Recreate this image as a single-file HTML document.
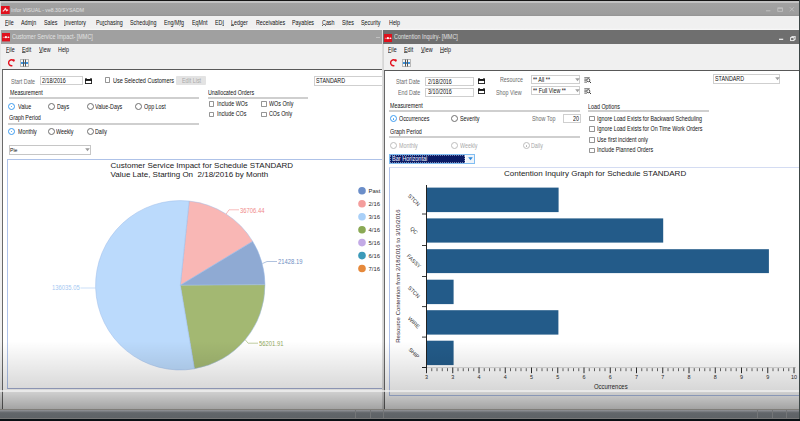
<!DOCTYPE html>
<html><head><meta charset="utf-8"><style>
*{margin:0;padding:0;box-sizing:border-box}
html,body{width:800px;height:421px;overflow:hidden}
body{position:relative;background:#f0f0f0;font-family:"Liberation Sans",sans-serif}
.a{position:absolute}
.t{position:absolute;white-space:nowrap;font-size:6.3px;line-height:10px;height:10px;color:#111;transform:scaleX(.85);transform-origin:0 0;-webkit-text-stroke-width:0px}
u{text-decoration-thickness:0.5px;text-underline-offset:0px;text-decoration-color:#666}
.n{transform:none;-webkit-text-stroke-width:0}
.g{color:#6a6a6a}
.w{color:#e2e2e2;-webkit-text-stroke-width:0}
.d{color:#a8a8a8}
.inp{position:absolute;background:#fff;border:1px solid #cfcfcf}
.sep{position:absolute;height:2px;background:#cfcfcf}
.rad{position:absolute;width:7px;height:7px;border:1.1px solid #6e6e6e;border-radius:50%;background:#fff}
.rad.on{border-color:#3d9cf0;border-width:1.3px}
.rad.on::after{content:"";position:absolute;left:1.5px;top:1.5px;width:1.9px;height:1.9px;border-radius:50%;background:#3d9cf0}
.rad.dis{border-color:#bdbdbd}
.rad.dis.on::after{background:#b0b0b0}
.chk{position:absolute;width:5.5px;height:5.5px;border:1px solid #959595;border-radius:0.8px;background:#fff}
.cal{position:absolute;width:6.8px;height:6.2px;border:0.8px solid #333;border-top-width:1.6px;border-radius:0.8px;background:#fff}
</style></head><body>

<!-- top dark strip + main title -->
<div class="a" style="left:0;top:0;width:800px;height:1.4px;background:#151515"></div>
<div class="a" style="left:0;top:1.4px;width:800px;height:1.4px;background:#c2c2c2"></div>
<div class="a" style="left:0;top:2.8px;width:800px;height:13.7px;background:linear-gradient(#a2a2a2,#9d9d9d 85%,#949494)"></div>
<svg class="a" style="left:1.3px;top:5.8px" width="8.7" height="8.2" viewBox="0 0 8.7 8.2"><rect width="8.7" height="8.2" fill="#e0101c"/><path d="M1.8 5.4L3.2 4.2L4.4 2.6L5.6 4.6L7.2 3.8" fill="none" stroke="#fff" stroke-width="1.2" opacity=".85"/></svg>
<div class="t w" style="left:11.3px;top:5px;font-size:6.05px;color:#e0e0e0">Infor VISUAL - ve8.30/SYSADM</div>
<div class="a" style="left:0;top:1.4px;width:1px;height:15px;background:#d4d4d4"></div>
<svg class="a" style="left:764px;top:5px" width="34" height="9" viewBox="764 5 34 9"><path d="M766 10.8H770.4" stroke="#c4c4c4" stroke-width="0.9"/><rect x="777.8" y="7.9" width="4.6" height="3.4" fill="none" stroke="#c4c4c4" stroke-width="0.8"/><path d="M777.8 8.3H782.4" stroke="#c4c4c4" stroke-width="0.9"/><path d="M789.8 7.2L793.9 11.3M793.9 7.2L789.8 11.3" stroke="#c4c4c4" stroke-width="0.8"/></svg>

<!-- main menu -->
<div class="a" style="left:0;top:16.5px;width:799px;height:13px;background:linear-gradient(#f0f0f0 85%,#f8f8f8)"></div>
<div class="t" style="left:5px;top:17.5px"><u>F</u>ile</div>
<div class="t" style="left:21px;top:17.5px">Adm<u>i</u>n</div>
<div class="t" style="left:44px;top:17.5px">S<u>a</u>les</div>
<div class="t" style="left:64px;top:17.5px"><u>I</u>nventory</div>
<div class="t" style="left:96px;top:17.5px">Pu<u>r</u>chasing</div>
<div class="t" style="left:130px;top:17.5px">Schedu<u>l</u>ing</div>
<div class="t" style="left:164px;top:17.5px">Eng/<u>M</u>fg</div>
<div class="t" style="left:191.5px;top:17.5px">E<u>q</u>Mnt</div>
<div class="t" style="left:215px;top:17.5px">ED<u>I</u></div>
<div class="t" style="left:231px;top:17.5px"><u>L</u>edger</div>
<div class="t" style="left:256px;top:17.5px">Receiv<u>a</u>bles</div>
<div class="t" style="left:292px;top:17.5px">Paya<u>b</u>les</div>
<div class="t" style="left:322px;top:17.5px"><u>C</u>ash</div>
<div class="t" style="left:341.5px;top:17.5px">Si<u>t</u>es</div>
<div class="t" style="left:361px;top:17.5px"><u>S</u>ecurity</div>
<div class="t" style="left:389px;top:17.5px"><u>H</u>elp</div>

<!-- ============ LEFT CHILD WINDOW ============ -->
<div class="a" style="left:0;top:29.5px;width:383px;height:381px;background:#f0f0f0"></div>
<div class="a" style="left:0;top:30px;width:383px;height:13.5px;background:#a0a0a0"></div>
<div class="a" style="left:0;top:29.5px;width:1px;height:40px;background:#e4e4e4"></div>
<svg class="a" style="left:2px;top:33.3px" width="8.3" height="8.4" viewBox="0 0 8.3 8.4"><rect width="8.3" height="8.4" fill="#e0101c"/><path d="M0.8 4.3H7.4" stroke="#fff" stroke-width="0.7" opacity=".7"/><circle cx="3.9" cy="4.2" r="1.1" fill="#fff" opacity=".9"/><circle cx="6.5" cy="4.3" r="0.8" fill="#fff" opacity=".9"/></svg>
<div class="t w" style="left:12px;top:32px;font-size:6.45px">Customer Service Impact- [MMC]</div>
<div class="a" style="left:376px;top:37px;width:4px;height:1px;background:#c0c0c0"></div>
<div class="t" style="left:6px;top:44.5px"><u>F</u>ile</div>
<div class="t" style="left:22px;top:44.5px"><u>E</u>dit</div>
<div class="t" style="left:39px;top:44.5px"><u>V</u>iew</div>
<div class="t" style="left:58px;top:44.5px"><u>H</u>elp</div>
<!-- toolbar icons -->
<svg class="a" style="left:7px;top:58px" width="10" height="10" viewBox="0 0 10 10"><path d="M6.32 2.34 A3 3 0 1 0 4.86 7.79" fill="none" stroke="#e3101e" stroke-width="1.4" stroke-linecap="round"/><circle cx="6.7" cy="2.5" r="1.15" fill="#e3101e"/></svg>
<svg class="a" style="left:20px;top:59px" width="9" height="8" viewBox="0 0 9 8"><rect x="0.5" y="0.5" width="8" height="7" fill="#f6f6f6" stroke="#b8b8b8" stroke-width="1"/><rect x="1" y="3" width="7" height="2" fill="#3d94e0"/><rect x="3" y="0.5" width="1" height="7" fill="#555"/><rect x="5" y="0.5" width="1" height="7" fill="#555"/></svg>

<!-- content frame -->
<div class="a" style="left:2px;top:69px;width:381px;height:341px;background:#fff;border-left:1.2px solid #6a6a6a;border-top:1.2px solid #585858"></div>
<div class="t g" style="left:11px;top:77px">Start Date</div>
<div class="inp" style="left:39.5px;top:76px;width:43px;height:9px"></div>
<div class="t" style="left:42px;top:76px">2/18/2016</div>
<svg class="a" style="left:85px;top:77.7px" width="7" height="6" viewBox="0 0 7 6"><rect x="0.45" y="1.5" width="6.1" height="4.05" fill="#fff" stroke="#1c1c1c" stroke-width="0.9"/><rect x="0" y="1.2" width="7" height="1.7" fill="#111"/><rect x="0.3" y="0" width="1.4" height="1.6" fill="#333"/><rect x="5.3" y="0" width="1.4" height="1.6" fill="#333"/></svg>
<div class="chk" style="left:104.5px;top:77.3px"></div>
<div class="t" style="left:112.5px;top:76px;font-size:6.5px">Use Selected Customers</div>
<div class="a" style="left:176px;top:76px;width:30px;height:9px;background:#e3e3e3;border-radius:1px"></div>
<div class="t d" style="left:181.5px;top:75.5px">Edit List</div>
<div class="inp" style="left:313.5px;top:76px;width:75px;height:9.5px"></div>
<div class="t" style="left:316px;top:76px">STANDARD</div>

<div class="t" style="left:10px;top:87.5px">Measurement</div>
<div class="sep" style="left:8.5px;top:97px;width:190.5px"></div>
<div class="rad on" style="left:8px;top:103px"></div><div class="t" style="left:18px;top:102px">Value</div>
<div class="rad" style="left:48px;top:103px"></div><div class="t" style="left:57px;top:102px">Days</div>
<div class="rad" style="left:87px;top:103px"></div><div class="t" style="left:95px;top:102px">Value-Days</div>
<div class="rad" style="left:135px;top:103px"></div><div class="t" style="left:143.5px;top:102px">Opp Lost</div>
<div class="t" style="left:8.5px;top:113px">Graph Period</div>
<div class="sep" style="left:8px;top:122.8px;width:191px"></div>
<div class="rad on" style="left:8px;top:128px"></div><div class="t" style="left:17.5px;top:127px">Monthly</div>
<div class="rad" style="left:48px;top:128px"></div><div class="t" style="left:56px;top:127px">Weekly</div>
<div class="rad" style="left:87px;top:128px"></div><div class="t" style="left:95px;top:127px">Daily</div>

<div class="t" style="left:208px;top:87.5px">Unallocated Orders</div>
<div class="sep" style="left:208px;top:97px;width:99.5px"></div>
<div class="chk" style="left:208.5px;top:101px"></div><div class="t" style="left:217px;top:98.5px">Include WOs</div>
<div class="chk" style="left:261px;top:101px"></div><div class="t" style="left:269px;top:98.5px">WOs Only</div>
<div class="chk" style="left:208.5px;top:111.5px"></div><div class="t" style="left:217px;top:109px">Include COs</div>
<div class="chk" style="left:261px;top:111.5px"></div><div class="t" style="left:269px;top:109px">COs Only</div>

<!-- Pie dropdown -->
<div class="inp" style="left:8.5px;top:145px;width:82.5px;height:10px;border-color:#c6c6c6"></div>
<div class="t" style="left:10px;top:145px;font-size:6.08px">Pie</div>
<svg class="a" style="left:84.7px;top:148.4px" width="5" height="3.4" viewBox="0 0 5 3.4"><path d="M0.2 0.2H4.8L2.5 3.2Z" fill="#9a9a9a"/></svg>

<!-- pie chart box -->
<div class="a" style="left:7px;top:159px;width:380px;height:229.5px;border:1px solid #aec2e8;border-bottom:1.6px solid #a4aed2;background:#fff"></div>
<div class="t n" style="left:110.5px;top:161px;font-size:8px;color:#1a1a1a">Customer Service Impact for Schedule STANDARD</div>
<div class="t n" style="left:110.5px;top:169.9px;font-size:8px;color:#1a1a1a">Value Late, Starting On&nbsp; 2/18/2016 by Month</div>
<svg class="a" style="left:0;top:0" width="383" height="400" viewBox="0 0 383 400">
  <g stroke="#9ebde8" stroke-width="0.5">
  <path id="p1" d="M180.3 285.3L189.15 201.06A84.7 84.7 0 0 1 252.73 241.40Z" fill="#f9b7b5"/>
  <path id="p2" d="M180.3 285.3L252.73 241.40A84.7 84.7 0 0 1 265.00 284.69Z" fill="#8faad3"/>
  <path id="p3" d="M180.3 285.3L265.00 284.69A84.7 84.7 0 0 1 194.42 368.81Z" fill="#a3b872"/>
  <path id="p4" d="M180.3 285.3L194.42 368.81A84.7 84.7 0 1 1 189.15 201.06Z" fill="#bbdafc"/>
  </g>
  <polyline points="226.2,214 229,209.8 239,209.8" fill="none" stroke="#f28d8d" stroke-width="0.6"/>
  <polyline points="262.5,263.5 267,261.5 277,261.5" fill="none" stroke="#7b98c8" stroke-width="0.6"/>
  <polyline points="245.3,339.9 248.1,343.2 258,343.2" fill="none" stroke="#97ad63" stroke-width="0.6"/>
  <polyline points="80.5,288 95.5,288" fill="none" stroke="#a9cbf3" stroke-width="0.6"/>
  <g stroke="none">
  <circle cx="362" cy="190.7" r="3.8" fill="#6b8ec9"/>
  <circle cx="362" cy="203.7" r="3.8" fill="#f49d9c"/>
  <circle cx="362" cy="216.7" r="3.8" fill="#a9d0f8"/>
  <circle cx="362" cy="229.7" r="3.8" fill="#8aa955"/>
  <circle cx="362" cy="242.6" r="3.8" fill="#c3aae6"/>
  <circle cx="362" cy="255.6" r="3.8" fill="#3c9ab9"/>
  <circle cx="362" cy="268.5" r="3.8" fill="#e6893b"/>
  </g>
</svg>
<div class="t n" style="left:240px;top:205.5px;font-size:6.5px;transform:scaleX(.9);color:#f08a8a">36706.44</div>
<div class="t n" style="left:277.5px;top:256.5px;font-size:6.5px;transform:scaleX(.9);color:#6f8fc4">21428.19</div>
<div class="t n" style="left:259.4px;top:339px;font-size:6.5px;transform:scaleX(.9);color:#91a85c">56201.91</div>
<div class="t n" style="left:51.8px;top:282.5px;font-size:6.5px;transform:scaleX(.9);color:#a5c8f2">136035.05</div>
<div class="t n" style="left:368.5px;top:185.7px;font-size:5.9px;color:#2a2a2a">Past</div>
<div class="t n" style="left:368.5px;top:198.7px;font-size:5.9px;color:#2a2a2a">2/16</div>
<div class="t n" style="left:368.5px;top:211.7px;font-size:5.9px;color:#2a2a2a">3/16</div>
<div class="t n" style="left:368.5px;top:224.7px;font-size:5.9px;color:#2a2a2a">4/16</div>
<div class="t n" style="left:368.5px;top:237.6px;font-size:5.9px;color:#2a2a2a">5/16</div>
<div class="t n" style="left:368.5px;top:250.6px;font-size:5.9px;color:#2a2a2a">6/16</div>
<div class="t n" style="left:368.5px;top:263.5px;font-size:5.9px;color:#2a2a2a">7/16</div>

<!-- ============ RIGHT CHILD WINDOW ============ -->
<div class="a" style="left:382px;top:29.5px;width:2px;height:381px;background:#dcdcdc"></div>
<div class="a" style="left:383px;top:29.5px;width:416px;height:381px;background:#f0f0f0;border-left:1px solid #d6d6d6"></div>
<div class="a" style="left:383px;top:30px;width:416px;height:13.5px;background:#6f6f6f"></div>
<svg class="a" style="left:384px;top:33.5px" width="8.3" height="8.4" viewBox="0 0 8.3 8.4"><rect width="8.3" height="8.4" fill="#e0101c"/><path d="M0.8 4.3H7.4" stroke="#fff" stroke-width="0.7" opacity=".7"/><circle cx="3.9" cy="4.2" r="1.1" fill="#fff" opacity=".9"/><circle cx="6.5" cy="4.3" r="0.8" fill="#fff" opacity=".9"/></svg>
<div class="t w" style="left:394px;top:32px;font-size:6.45px">Contention Inquiry- [MMC]</div>
<svg class="a" style="left:776px;top:34px" width="22" height="8" viewBox="776 34 22 8"><path d="M779 39.3H783.2" stroke="#f2f2f2" stroke-width="1.2"/><rect x="791.9" y="36.4" width="3.3" height="3" fill="none" stroke="#f0f0f0" stroke-width="0.8"/><rect x="790.6" y="37.6" width="3.4" height="3" fill="#6f6f6f" stroke="#f4f4f4" stroke-width="0.9"/></svg>
<div class="t" style="left:388px;top:45px"><u>F</u>ile</div>
<div class="t" style="left:404px;top:45px"><u>E</u>dit</div>
<div class="t" style="left:421px;top:45px"><u>V</u>iew</div>
<div class="t" style="left:440px;top:45px"><u>H</u>elp</div>
<svg class="a" style="left:389px;top:58.3px" width="10" height="10" viewBox="0 0 10 10"><path d="M6.32 2.34 A3 3 0 1 0 4.86 7.79" fill="none" stroke="#e3101e" stroke-width="1.4" stroke-linecap="round"/><circle cx="6.7" cy="2.5" r="1.15" fill="#e3101e"/></svg>
<svg class="a" style="left:402px;top:59px" width="9" height="8" viewBox="0 0 9 8"><rect x="0.5" y="0.5" width="8" height="7" fill="#f6f6f6" stroke="#b8b8b8" stroke-width="1"/><rect x="1" y="3" width="7" height="2" fill="#3d94e0"/><rect x="3" y="0.5" width="1" height="7" fill="#555"/><rect x="5" y="0.5" width="1" height="7" fill="#555"/></svg>

<div class="a" style="left:384px;top:69.5px;width:415px;height:341px;background:#fff;border-left:1.4px solid #686868;border-top:1.2px solid #585858"></div>
<div class="t g" style="left:396px;top:77.3px">Start Date</div>
<div class="inp" style="left:425.4px;top:76.5px;width:48.6px;height:9px"></div>
<div class="t" style="left:427.5px;top:76.5px">2/18/2016</div>
<svg class="a" style="left:478px;top:77.7px" width="7" height="6" viewBox="0 0 7 6"><rect x="0.45" y="1.5" width="6.1" height="4.05" fill="#fff" stroke="#1c1c1c" stroke-width="0.9"/><rect x="0" y="1.2" width="7" height="1.7" fill="#111"/><rect x="0.3" y="0" width="1.4" height="1.6" fill="#333"/><rect x="5.3" y="0" width="1.4" height="1.6" fill="#333"/></svg>
<div class="t g" style="left:398px;top:88.2px">End Date</div>
<div class="inp" style="left:425.4px;top:87.5px;width:48.6px;height:9px"></div>
<div class="t" style="left:427.5px;top:87.2px">3/10/2016</div>
<svg class="a" style="left:478px;top:88px" width="7" height="6" viewBox="0 0 7 6"><rect x="0.45" y="1.5" width="6.1" height="4.05" fill="#fff" stroke="#1c1c1c" stroke-width="0.9"/><rect x="0" y="1.2" width="7" height="1.7" fill="#111"/><rect x="0.3" y="0" width="1.4" height="1.6" fill="#333"/><rect x="5.3" y="0" width="1.4" height="1.6" fill="#333"/></svg>
<div class="t g" style="left:499.6px;top:74.8px">Resource</div>
<div class="t g" style="left:496px;top:88.2px">Shop View</div>
<div class="inp" style="left:530.7px;top:75px;width:49.5px;height:9.2px"></div>
<div class="t" style="left:533px;top:74.5px">** All **</div>
<svg class="a" style="left:574.7px;top:78.4px" width="5" height="3.4" viewBox="0 0 5 3.4"><path d="M0.2 0.2H4.8L2.5 3.2Z" fill="#a0a0a0"/></svg>
<div class="inp" style="left:530.7px;top:86px;width:49.5px;height:9.2px"></div>
<div class="t" style="left:533px;top:85.5px">** Full View **</div>
<svg class="a" style="left:574.7px;top:89.4px" width="5" height="3.4" viewBox="0 0 5 3.4"><path d="M0.2 0.2H4.8L2.5 3.2Z" fill="#a0a0a0"/></svg>
<svg class="a" style="left:583.7px;top:77px" width="7.5" height="6.5" viewBox="0 0 7.5 6.5"><path d="M0.3 0.7H5.8M0.3 2.2H2.6M0.3 3.7H2.3M0.3 5.2H3" stroke="#3a3a3a" stroke-width="0.7"/><circle cx="4.3" cy="3.2" r="1.55" fill="#fff" stroke="#2a2a2a" stroke-width="0.75"/><path d="M5.4 4.3L6.9 5.9" stroke="#222" stroke-width="1"/></svg>
<svg class="a" style="left:583.7px;top:87.6px" width="7.5" height="6.5" viewBox="0 0 7.5 6.5"><path d="M0.3 0.7H5.8M0.3 2.2H2.6M0.3 3.7H2.3M0.3 5.2H3" stroke="#3a3a3a" stroke-width="0.7"/><circle cx="4.3" cy="3.2" r="1.55" fill="#fff" stroke="#2a2a2a" stroke-width="0.75"/><path d="M5.4 4.3L6.9 5.9" stroke="#222" stroke-width="1"/></svg>
<div class="inp" style="left:712.6px;top:74.3px;width:67.4px;height:9.7px"></div>
<div class="t" style="left:714.5px;top:74px">STANDARD</div>
<svg class="a" style="left:774.7px;top:77.4px" width="5" height="3.4" viewBox="0 0 5 3.4"><path d="M0.2 0.2H4.8L2.5 3.2Z" fill="#a0a0a0"/></svg>

<div class="t" style="left:389.6px;top:101px">Measurement</div>
<div class="sep" style="left:389px;top:109.9px;width:191px"></div>
<div class="rad on" style="left:390px;top:115.3px"></div><div class="t" style="left:399px;top:114.3px">Occurrences</div>
<div class="rad" style="left:451px;top:115.3px"></div><div class="t" style="left:460px;top:114.3px">Severity</div>
<div class="t g" style="left:531.8px;top:114px">Show Top</div>
<div class="inp" style="left:563px;top:114.2px;width:17.8px;height:9.1px"></div>
<div class="t" style="left:573px;top:113.5px">20</div>
<div class="t" style="left:389.6px;top:126.7px">Graph Period</div>
<div class="sep" style="left:389px;top:136px;width:191px"></div>
<div class="rad dis" style="left:390px;top:142.3px"></div><div class="t d" style="left:399px;top:141.3px">Monthly</div>
<div class="rad dis" style="left:451px;top:142.3px"></div><div class="t d" style="left:460px;top:141.3px">Weekly</div>
<div class="rad dis on" style="left:523px;top:142.3px;border-color:#bdbdbd"></div><div class="t d" style="left:531px;top:141.3px">Daily</div>
<div class="a" style="left:389.3px;top:154px;width:85.7px;height:9.5px;background:#fff;border:1px solid #80bdf2"></div>
<div class="a" style="left:390.3px;top:154.8px;width:75px;height:8px;background:#0a1c66;border:0.6px dotted #8088b0"></div>
<div class="t" style="left:391.5px;top:153.8px;color:#f4f4ff;font-size:6.55px;-webkit-text-stroke-width:0">Bar Horizontal</div>
<div class="a" style="left:466px;top:155px;width:8px;height:7.6px;background:#eef3f9"></div>
<svg class="a" style="left:467.7px;top:157.4px" width="5" height="3.4" viewBox="0 0 5 3.4"><path d="M0.2 0.2H4.8L2.5 3.2Z" fill="#2a88dd"/></svg>

<div class="t" style="left:588.3px;top:102px">Load Options</div>
<div class="sep" style="left:588px;top:110px;width:121px"></div>
<div class="chk" style="left:589px;top:115.8px"></div><div class="t" style="left:597px;top:114.3px">Ignore Load Exists for Backward Scheduling</div>
<div class="chk" style="left:589px;top:126.3px"></div><div class="t" style="left:597px;top:123.7px">Ignore Load Exists for On Time Work Orders</div>
<div class="chk" style="left:589px;top:137.3px"></div><div class="t" style="left:597px;top:134.7px">Use first incident only</div>
<div class="chk" style="left:589px;top:147.5px"></div><div class="t" style="left:597px;top:145px">Include Planned Orders</div>

<!-- bar chart box -->
<div class="a" style="left:389px;top:167px;width:420px;height:228.6px;border:1px solid #b0c2ea;border-top-color:#d4dcf2;background:#fff"></div>
<div class="t n" style="left:504px;top:168.7px;font-size:8px;color:#1a1a1a">Contention Inquiry Graph for Schedule STANDARD</div>
<svg class="a" style="left:383px;top:0" width="417" height="421" viewBox="383 0 417 421">
  <g fill="#235b89">
    <rect x="427" y="187.6" width="131.6" height="24.5"/>
    <rect x="427" y="218.4" width="236.2" height="24.2"/>
    <rect x="427" y="249.2" width="341.9" height="23.9"/>
    <rect x="427" y="279.7" width="26.6" height="24.4"/>
    <rect x="427" y="310.2" width="131.4" height="24.4"/>
    <rect x="427" y="340.7" width="26.6" height="24.4"/>
  </g>
  <g stroke="#222" fill="none">
    <path d="M426.5 185V368" stroke-width="1"/>
    <path d="M422 367.5H427" stroke-width="1"/><path d="M427 367.6H796" stroke="#999" stroke-width="0.4"/>
    <path id="ticks" d="M426.50 367.5V373.2M452.75 367.5V373.2M479.00 367.5V373.2M505.25 367.5V373.2M531.50 367.5V373.2M557.75 367.5V373.2M584.00 367.5V373.2M610.25 367.5V373.2M636.50 367.5V373.2M662.75 367.5V373.2M689.00 367.5V373.2M715.25 367.5V373.2M741.50 367.5V373.2M767.75 367.5V373.2M794.00 367.5V373.2" stroke-width="0.95"/><path id="ticks2" d="M431.75 368.2V371.2M437.00 368.2V371.2M442.25 368.2V371.2M447.50 368.2V371.2M458.00 368.2V371.2M463.25 368.2V371.2M468.50 368.2V371.2M473.75 368.2V371.2M484.25 368.2V371.2M489.50 368.2V371.2M494.75 368.2V371.2M500.00 368.2V371.2M510.50 368.2V371.2M515.75 368.2V371.2M521.00 368.2V371.2M526.25 368.2V371.2M536.75 368.2V371.2M542.00 368.2V371.2M547.25 368.2V371.2M552.50 368.2V371.2M563.00 368.2V371.2M568.25 368.2V371.2M573.50 368.2V371.2M578.75 368.2V371.2M589.25 368.2V371.2M594.50 368.2V371.2M599.75 368.2V371.2M605.00 368.2V371.2M615.50 368.2V371.2M620.75 368.2V371.2M626.00 368.2V371.2M631.25 368.2V371.2M641.75 368.2V371.2M647.00 368.2V371.2M652.25 368.2V371.2M657.50 368.2V371.2M668.00 368.2V371.2M673.25 368.2V371.2M678.50 368.2V371.2M683.75 368.2V371.2M694.25 368.2V371.2M699.50 368.2V371.2M704.75 368.2V371.2M710.00 368.2V371.2M720.50 368.2V371.2M725.75 368.2V371.2M731.00 368.2V371.2M736.25 368.2V371.2M746.75 368.2V371.2M752.00 368.2V371.2M757.25 368.2V371.2M762.50 368.2V371.2M773.00 368.2V371.2M778.25 368.2V371.2M783.50 368.2V371.2M788.75 368.2V371.2" stroke-width="0.75" stroke="#333"/>
    <path d="M422 214H427M422 245.5H427M422 276.5H427M422 306.6H427M422 337.1H427" stroke-width="0.9"/>
  </g>
  <g id="xl" font-family="Liberation Sans" font-size="5.4" fill="#2a2a2a" text-anchor="middle"><text x="426.50" y="379">3</text><text x="452.75" y="379">3</text><text x="479.00" y="379">4</text><text x="505.25" y="379">4</text><text x="531.50" y="379">5</text><text x="557.75" y="379">5</text><text x="584.00" y="379">6</text><text x="610.25" y="379">6</text><text x="636.50" y="379">7</text><text x="662.75" y="379">7</text><text x="689.00" y="379">8</text><text x="715.25" y="379">8</text><text x="741.50" y="379">9</text><text x="767.75" y="379">9</text><text x="794.00" y="379">10</text></g>
  <g font-family="Liberation Sans" font-size="5.4" fill="#2e2e2e" text-anchor="middle">
    <text transform="translate(414,200) rotate(45)" dy="2">STCN</text>
    <text transform="translate(414,230.5) rotate(45)" dy="2">QC</text>
    <text transform="translate(414,261) rotate(45)" dy="2">FASSY</text>
    <text transform="translate(414,292) rotate(45)" dy="2">STCN</text>
    <text transform="translate(414,322.5) rotate(45)" dy="2">WIRE</text>
    <text transform="translate(414,353) rotate(45)" dy="2">SHIP</text>
  </g>
  <text transform="translate(398,276) rotate(-90)" dy="2" font-family="Liberation Sans" font-size="6" fill="#301c30" text-anchor="middle">Resource Contention from 2/18/2016 to 3/10/2016</text>
  <text transform="translate(594,389) scale(.9,1)" font-family="Liberation Sans" font-size="6.6" fill="#2a2a2a">Occurrences</text>
</svg>

<!-- bottom shading overlay -->
<div class="a" style="left:0;top:341px;width:800px;height:49px;background:linear-gradient(to bottom,rgba(0,0,0,0) 0%,rgba(0,0,0,0.055) 35%,rgba(0,0,0,0.155) 100%)"></div>
<div class="a" style="left:0;top:390px;width:800px;height:1.5px;background:rgba(225,225,225,0.75)"></div>
<div class="a" style="left:0;top:391.5px;width:800px;height:17.5px;background:linear-gradient(to bottom,rgba(0,0,0,0.19) 0%,rgba(0,0,0,0.36) 100%)"></div>
<!-- status bar -->
<div class="a" style="left:0;top:409px;width:800px;height:1px;background:#7e7c78"></div>
<div class="a" style="left:0;top:410px;width:800px;height:7.5px;background:linear-gradient(to bottom,#929398 0%,#62666a 35%,#5e6266 100%)"></div>
<div class="a" style="left:0;top:417.5px;width:800px;height:1.5px;background:#777"></div>
<div class="a" style="left:355px;top:410px;width:0.8px;height:8px;background:#747678"></div>
<div class="a" style="left:369.5px;top:410px;width:0.8px;height:8px;background:#747678"></div>
<div class="a" style="left:383px;top:410px;width:0.8px;height:8px;background:#747678"></div>
<div class="a" style="left:757px;top:410px;width:0.8px;height:8px;background:#747678"></div>
<div class="a" style="left:771.5px;top:410px;width:0.8px;height:8px;background:#747678"></div>
<div class="a" style="left:786px;top:410px;width:0.8px;height:8px;background:#747678"></div>
<div class="a" style="left:0;top:419px;width:800px;height:2px;background:#0a1014"></div>

<div class="a" style="left:799px;top:0;width:1px;height:418.5px;background:#3c4646"></div>

</body></html>
